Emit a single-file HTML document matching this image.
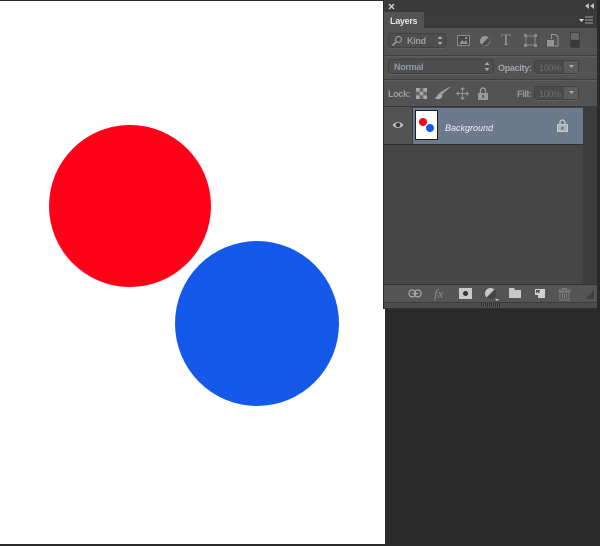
<!DOCTYPE html>
<html>
<head>
<meta charset="utf-8">
<style>
html,body{margin:0;padding:0;width:600px;height:546px;overflow:hidden;background:#2a2a2a;font-family:"Liberation Sans",sans-serif}
.a{position:absolute}
.t{position:absolute;white-space:nowrap;font-weight:bold;font-size:9px;letter-spacing:-.3px;line-height:12px;color:#9d9d9d}
.box{position:absolute;box-sizing:border-box;border:1px solid #424242;border-radius:3px;background:#4e4e4e;box-shadow:0 1px 0 #5f5f5f}
svg{position:absolute;overflow:visible}
#p{position:absolute;left:0;top:0;width:600px;height:546px;filter:blur(.35px)}
</style>
</head>
<body>
<div class="a" style="left:0;top:1px;width:385px;height:543px;background:#fff"></div>
<div class="a" style="left:49px;top:125px;width:162px;height:162px;border-radius:50%;background:#ff0019"></div>
<div class="a" style="left:175px;top:241px;width:164px;height:165px;border-radius:50%;background:#1459ea"></div>

<div id="p">
<!-- panel -->
<div class="a" style="left:383px;top:0;width:214px;height:309px;background:#535353;border-left:1px solid #2b2b2b;box-sizing:border-box"></div>
<div class="a" style="left:384px;top:0;width:213px;height:12px;background:#3a3a3a"></div>
<div class="a" style="left:384px;top:12px;width:213px;height:16px;background:#3b3b3b"></div>
<div class="a" style="left:384px;top:12px;width:40px;height:17px;background:#535353"></div>
<div class="t" style="left:390px;top:15px;color:#e4e4e4">Layers</div>
<svg style="left:388px;top:3px" width="7" height="7"><path d="M1 1L6 6M6 1L1 6" stroke="#ccc" stroke-width="1.4"/></svg>
<svg style="left:585px;top:3px" width="9" height="7"><path d="M4 0V6L0 3ZM9 0V6L5 3Z" fill="#bbb"/></svg>
<svg style="left:579px;top:16px" width="15" height="9"><path d="M0 3H5L2.500 6Z" fill="#ddd"/><path d="M6 1H14M6 4H14M6 7H14" stroke="#888" stroke-width="1.300"/></svg>

<!-- filter row -->
<div class="box" style="left:388px;top:33px;width:58px;height:15px"></div>
<svg style="left:391px;top:35px" width="12" height="12"><circle cx="7.500" cy="4.500" r="3" fill="none" stroke="#999" stroke-width="1.200"/><path d="M5 7L1.500 10.500" stroke="#999" stroke-width="1.600"/></svg>
<div class="t" style="left:407px;top:35px">Kind</div>
<svg style="left:437px;top:36px" width="6" height="10"><path d="M3 0L5.500 3H.5ZM3 9L5.500 6H.5Z" fill="#a5a5a5"/></svg>
<svg style="left:457px;top:35px" width="13" height="12"><rect x=".5" y=".5" width="12" height="10" fill="#474747" stroke="#8a8a8a"/><path d="M2 9L5 5L7 7L9 5L11 9Z" fill="#8f8f8f"/><rect x="8" y="2" width="2" height="2" fill="#8f8f8f"/></svg>
<svg style="left:479px;top:35px" width="12" height="12"><circle cx="6" cy="6" r="5" fill="#989898"/><path d="M9.500 2.500A5 5 0 0 1 2.500 9.500Z" fill="#4a4a4a"/></svg>
<div class="a" style="left:501px;top:32px;font:16px 'Liberation Serif',serif;line-height:17px;color:#969696;white-space:nowrap">T</div>
<svg style="left:524px;top:34px" width="13" height="13"><rect x="2" y="2" width="9" height="9" fill="none" stroke="#8a8a8a"/><path d="M0 0H3V3H0ZM10 0H13V3H10ZM0 10H3V13H0ZM10 10H13V13H10Z" fill="#8a8a8a"/></svg>
<svg style="left:546px;top:34px" width="13" height="13"><path d="M5.500 5V.5H9.500L12 3V12H8" fill="none" stroke="#959595"/><rect x="1" y="6" width="7" height="6.500" fill="#959595"/></svg>
<div class="a" style="left:570px;top:32px;width:10px;height:16px;box-sizing:border-box;background:#3a3a3a;border:1px solid #404040;border-radius:2px"></div>
<div class="a" style="left:571px;top:33px;width:8px;height:7px;background:#666;border-radius:1px"></div>
<div class="a" style="left:384px;top:55px;width:213px;height:1px;background:#3f3f3f"></div>
<div class="a" style="left:384px;top:56px;width:213px;height:1px;background:#5e5e5e"></div>

<!-- blend row -->
<div class="box" style="left:388px;top:59px;width:106px;height:15px"></div>
<div class="t" style="left:394px;top:61px;color:#8f98a0">Normal</div>
<svg style="left:484px;top:62px" width="6" height="10"><path d="M3 0L5.500 3H.5ZM3 9L5.500 6H.5Z" fill="#a5a5a5"/></svg>
<div class="t" style="left:498px;top:62px;color:#a0a4a8">Opacity:</div>
<div class="box" style="left:534px;top:60px;width:45px;height:14px;background:#4b4b4b"></div>
<div class="a" style="left:564px;top:61px;width:14px;height:12px;background:#5c5c5c"></div>
<div class="t" style="left:539px;top:62px;color:#6f6f6f;font-weight:normal">100%</div>
<svg style="left:569px;top:65px" width="6" height="4"><path d="M0 0H5L2.500 3Z" fill="#aaa"/></svg>
<div class="a" style="left:384px;top:79px;width:213px;height:1px;background:#3f3f3f"></div>
<div class="a" style="left:384px;top:80px;width:213px;height:1px;background:#5e5e5e"></div>

<!-- lock row -->
<div class="t" style="left:388px;top:88px">Lock:</div>
<svg style="left:416px;top:88px" width="11" height="11"><rect width="11" height="11" fill="#8a8a8a"/><path d="M0 0H3.700V3.700H0ZM7.300 0H11V3.700H7.300ZM3.700 3.700H7.300V7.300H3.700ZM0 7.300H3.700V11H0ZM7.300 7.300H11V11H7.300Z" fill="#a8a8a8"/><path d="M3.700 0H7.300V3.700H3.700ZM0 3.700H3.700V7.300H0ZM7.300 3.700H11V7.300H7.300ZM3.700 7.300H7.300V11H3.700Z" fill="#6a6a6a"/></svg>
<svg style="left:434px;top:86px" width="17" height="15"><path d="M16 1L8 8L6.500 6.500Z" fill="#999" stroke="#999" stroke-width=".8"/><path d="M6.500 7C3.500 7 4 11 .5 12C3 14 8 14 8.500 9Z" fill="#a5a5a5"/></svg>
<svg style="left:456px;top:87px" width="13" height="13"><path d="M6.500 1V12M1 6.500H12" stroke="#969696"/><path d="M6.500 0L9 2.500H4ZM6.500 13L9 10.500H4ZM0 6.500L2.500 4V9ZM13 6.500L10.500 4V9Z" fill="#969696"/></svg>
<svg style="left:478px;top:87px" width="10" height="13"><path d="M2.500 6V3.500A2.500 2.500 0 0 1 7.500 3.500V6" fill="none" stroke="#999" stroke-width="1.400"/><rect y="6" width="10" height="7" fill="#999"/><rect x="4" y="8" width="2" height="3" fill="#666"/></svg>
<div class="t" style="left:517px;top:88px">Fill:</div>
<div class="box" style="left:534px;top:86px;width:45px;height:14px;background:#4b4b4b"></div>
<div class="a" style="left:564px;top:87px;width:14px;height:12px;background:#5c5c5c"></div>
<div class="t" style="left:539px;top:88px;color:#6f6f6f;font-weight:normal">100%</div>
<svg style="left:569px;top:91px" width="6" height="4"><path d="M0 0H5L2.500 3Z" fill="#aaa"/></svg>

<!-- list -->
<div class="a" style="left:384px;top:106px;width:199px;height:178px;background:#464646"></div>
<div class="a" style="left:384px;top:106px;width:199px;height:1px;background:#353535"></div>
<div class="a" style="left:583px;top:106px;width:14px;height:178px;background:#3c3c3c"></div>
<div class="a" style="left:384px;top:107px;width:28px;height:37px;background:#525252"></div>
<div class="a" style="left:412px;top:108px;width:171px;height:36px;background:#6b7b8d"></div>
<div class="a" style="left:384px;top:144px;width:199px;height:1px;background:#2f2f2f"></div>
<div class="a" style="left:412px;top:107px;width:1px;height:37px;background:#3a3a3a"></div>
<svg style="left:392px;top:120px" width="12" height="10"><path d="M.5 5C3 1 9 1 11.500 5C9 9 3 9 .5 5Z" fill="#bbb"/><circle cx="6" cy="5" r="2.300" fill="#3a3a3a"/></svg>
<div class="a" style="left:415px;top:110px;width:23px;height:30px;box-sizing:border-box;background:#fff;border:1px solid #1c1c1c"></div>
<div class="a" style="left:419px;top:118px;width:8px;height:8px;border-radius:50%;background:#ff0019"></div>
<div class="a" style="left:426px;top:124px;width:8px;height:8px;border-radius:50%;background:#1459ea"></div>
<div class="t" style="left:445px;top:122px;color:#eef1f4;font-style:italic;font-weight:normal;letter-spacing:0">Background</div>
<svg style="left:557px;top:119px" width="11" height="13"><path d="M3 6V3.500A2.500 2.500 0 0 1 8 3.500V6" fill="none" stroke="#c4c9ce" stroke-width="1.300"/><rect x=".5" y="5.500" width="10" height="7" fill="#aab2ba" stroke="#c4c9ce"/><rect x="4.500" y="8" width="2" height="2.500" fill="#666"/></svg>

<!-- footer -->
<div class="a" style="left:384px;top:284px;width:213px;height:1px;background:#323232"></div>
<div class="a" style="left:384px;top:285px;width:213px;height:17px;background:#555"></div>
<div class="a" style="left:384px;top:302px;width:213px;height:1px;background:#3c3c3c"></div>
<div class="a" style="left:384px;top:303px;width:213px;height:5px;background:#4d4d4d"></div>
<div class="a" style="left:384px;top:308px;width:213px;height:1px;background:#2f2f2f"></div>
<div class="a" style="left:481px;top:303px;width:19px;height:4px;background:repeating-linear-gradient(90deg,#2e2e2e 0 1px,#5a5a5a 1px 2px)"></div>
<svg style="left:408px;top:289px" width="14" height="9"><rect x="1" y="1" width="6.500" height="7" rx="3.200" fill="none" stroke="#a5a5a5" stroke-width="1.300"/><rect x="6.500" y="1" width="6.500" height="7" rx="3.200" fill="none" stroke="#a5a5a5" stroke-width="1.300"/><path d="M4 4.500H10" stroke="#a5a5a5" stroke-width="1.200"/></svg>
<div class="a" style="left:434px;top:286px;font:italic 13px 'Liberation Serif',serif;line-height:15px;color:#8a8a8a;white-space:nowrap">fx</div>
<svg style="left:459px;top:288px" width="13" height="11"><rect width="13" height="11" fill="#c8c8c8"/><circle cx="6.500" cy="5.500" r="2.500" fill="#333"/></svg>
<svg style="left:484px;top:287px" width="16" height="14"><circle cx="6.500" cy="6.500" r="5.500" fill="#c8c8c8"/><path d="M10.500 2.500A5.500 5.500 0 0 1 2.500 10.500Z" fill="#444"/><path d="M11 12H15L13 14Z" fill="#ccc"/></svg>
<svg style="left:509px;top:288px" width="12" height="10"><path d="M0 0H5L6 2H12V10H0Z" fill="#c8c8c8"/></svg>
<svg style="left:535px;top:288px" width="10" height="11"><path d="M0 1H10V10H3V7H0Z" fill="#d0d0d0"/><path d="M1 2H5V3H4L5 5H4L2 4V5H1Z" fill="#555"/></svg>
<svg style="left:559px;top:288px" width="11" height="12"><path d="M3.500 1.500V.5H7.500V1.500M0 2H11V3.500H0ZM1 4H10V12H1Z" fill="none" stroke="#7d7d7d"/><path d="M3.500 5.500V10.500M5.500 5.500V10.500M7.500 5.500V10.500" stroke="#7d7d7d"/></svg>
<svg style="left:586px;top:290px" width="9" height="9"><path d="M8 0V9H0Z" fill="#3f3f3f"/></svg>
</div>
</body>
</html>
